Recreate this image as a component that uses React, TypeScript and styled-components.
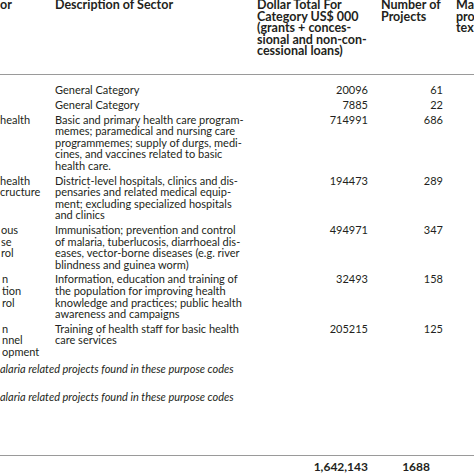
import React from "react";
import styled, { createGlobalStyle } from "styled-components";

const GlobalStyle = createGlobalStyle`
  html, body {
    margin: 0;
    padding: 0;
    background: #ffffff;
  }
  body {
    font-family: "Lato", "Open Sans", "DejaVu Sans", sans-serif;
    color: #231f20;
    font-size: 11px;
  }
`;

const Page = styled.div`
  width: 474px;
  height: 474px;
  overflow: hidden;
  margin-top: -1px;
`;

const Row = styled.div`
  display: grid;
  grid-template-columns: 55px 202px 124px 75px 1fr;
  line-height: 11.6px;
  padding: 1.5px 0;
`;

const HeaderRow = styled(Row)`
  padding: 0 0 17px;
  font-weight: 700;
  font-size: 12.5px;
  border-bottom: 1px solid #9a9a9a;
`;

const Head = styled.div`
  white-space: pre-line;
`;

const Sector = styled.div<{ $indent?: number }>`
  white-space: pre-line;
  padding-left: ${(p) => p.$indent ?? 0}px;
`;

const Desc = styled.div`
  white-space: pre-line;
`;

const Num = styled.div<{ $bold?: boolean; $right?: number }>`
  text-align: right;
  padding-right: ${(p) => p.$right ?? 13}px;
  font-weight: ${(p) => (p.$bold ? 700 : 400)};
  font-size: ${(p) => (p.$bold ? "12px" : "inherit")};
`;

const Body = styled.div`
  padding-top: 8px;
`;

const Note = styled.div<{ $gap?: number }>`
  font-style: italic;
  line-height: 11.6px;
  margin-top: ${(p) => p.$gap ?? 0}px;
  white-space: nowrap;
`;

const TotalRow = styled(Row)`
  margin-top: 53px;
  padding-top: 5px;
  border-top: 1px solid #9a9a9a;
`;

type Item = {
  sector: string;
  indent?: number;
  desc: string;
  dollars: string;
  projects: string;
};

const items: Item[] = [
  { sector: "", desc: "General Category", dollars: "20096", projects: "61" },
  { sector: "", desc: "General Category", dollars: "7885", projects: "22" },
  {
    sector: "health",
    desc: "Basic and primary health care program-\nmemes; paramedical and nursing care\nprogrammemes; supply of durgs, medi-\ncines, and vaccines related to basic\nhealth care.",
    dollars: "714991",
    projects: "686",
  },
  {
    sector: "health\ncructure",
    desc: "District-level hospitals, clinics and dis-\npensaries and related medical equip-\nment; excluding specialized hospitals\nand clinics",
    dollars: "194473",
    projects: "289",
  },
  {
    sector: " ous\nse\nrol",
    indent: 1,
    desc: "Immunisation; prevention and control\nof malaria, tuberlucosis, diarrhoeal dis-\neases, vector-borne diseases (e.g. river\nblindness and guinea worm)",
    dollars: "494971",
    projects: "347",
  },
  {
    sector: "n\ntion\nrol",
    indent: 2,
    desc: "Information, education and training of\nthe population for improving health\nknowledge and practices; public health\nawareness and campaigns",
    dollars: "32493",
    projects: "158",
  },
  {
    sector: "n\nnnel\nopment",
    indent: 2,
    desc: "Training of health staff for basic health\ncare services",
    dollars: "205215",
    projects: "125",
  },
];

export default function App() {
  return (
    <>
      <GlobalStyle />
      <Page>
        <HeaderRow>
          <Head>or</Head>
          <Head>Description of Sector</Head>
          <Head>
            {"Dollar Total For\nCategory US$ 000\n(grants + conces-\nsional and non-con-\ncessional loans)"}
          </Head>
          <Head>{"Number of\nProjects"}</Head>
          <Head>{"Ma\npro\ntex"}</Head>
        </HeaderRow>
        <Body>
          {items.map((item, index) => (
            <Row key={index}>
              <Sector $indent={item.indent}>{item.sector}</Sector>
              <Desc>{item.desc}</Desc>
              <Num>{item.dollars}</Num>
              <Num>{item.projects}</Num>
              <div />
            </Row>
          ))}
          <Note $gap={4}>alaria related projects found in these purpose codes</Note>
          <Note $gap={16}>alaria related projects found in these purpose codes</Note>
        </Body>
        <TotalRow>
          <div />
          <div />
          <Num $bold>1,642,143</Num>
          <Num $bold $right={26}>1688</Num>
          <div />
        </TotalRow>
      </Page>
    </>
  );
}
